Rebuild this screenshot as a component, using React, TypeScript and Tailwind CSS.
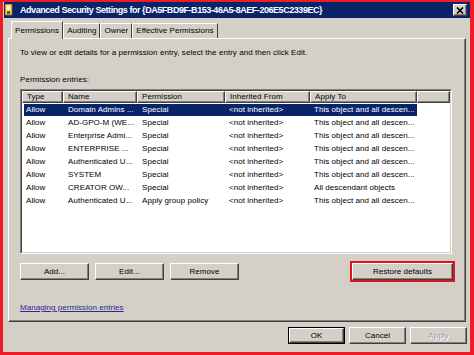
import React from "react";

const rows = [
  ["Allow", "Domain Admins ...", "Special", "<not inherited>", "This object and all descen..."],
  ["Allow", "AD-GPO-M (WE...", "Special", "<not inherited>", "This object and all descen..."],
  ["Allow", "Enterprise Admi...", "Special", "<not inherited>", "This object and all descen..."],
  ["Allow", "ENTERPRISE ...", "Special", "<not inherited>", "This object and all descen..."],
  ["Allow", "Authenticated U...", "Special", "<not inherited>", "This object and all descen..."],
  ["Allow", "SYSTEM", "Special", "<not inherited>", "This object and all descen..."],
  ["Allow", "CREATOR OW...", "Special", "<not inherited>", "All descendant objects"],
  ["Allow", "Authenticated U...", "Apply group policy", "<not inherited>", "This object and all descen..."],
];

const cols = [
  { label: "Type", w: "w-[41px]" },
  { label: "Name", w: "w-[74px]" },
  { label: "Permission", w: "w-[88px]" },
  { label: "Inherited From", w: "w-[85px]" },
  { label: "Apply To", w: "w-[107px]" },
];

const raised =
  "border border-t-white border-l-white border-r-[#404040] border-b-[#404040] shadow-[inset_-1px_-1px_0_#808080] bg-[#d4d0c8]";

function Button({ label, w, disabled, def }: { label: string; w: string; disabled?: boolean; def?: boolean }) {
  const inner = (
    <div className={`${raised} ${def ? "h-[15px]" : "h-[17px]"} flex items-center justify-center`}>
      <span className={disabled ? "text-[#a0a0a0] [text-shadow:1px_1px_0_#fff]" : ""}>{label}</span>
    </div>
  );
  if (def) return <div className={`${w} border border-black`}>{inner}</div>;
  return <div className={w}>{inner}</div>;
}

export default function App() {
  return (
    <div
      className="w-[474px] h-[355px] overflow-hidden border-solid border-[#ee1c24] border-l-[3px] border-t-[2px] border-r-[4px] border-b-[3px] bg-[#d4d0c8] text-black text-[8px] tracking-[0.05px] leading-[10px]"
      style={{ fontFamily: '"Liberation Sans", Arial, sans-serif' }}
    >
      {/* Title bar */}
      <div className="ml-[1px] h-[16px] bg-[#0a246a] flex items-center">
        <svg width="8" height="12" viewBox="0 0 8 12" className="ml-[1px]">
          <rect x="0" y="0" width="7" height="11" fill="#f2c94c" stroke="#8a6d1a" strokeWidth="0.8" />
          <rect x="1.5" y="1.5" width="4" height="5" fill="#fff3b0" />
          <rect x="2" y="7" width="3" height="3" fill="#6b5a2a" />
        </svg>
        <span className="ml-[7px] text-white font-bold text-[9px] tracking-[-0.45px]">
          Advanced Security Settings for {"{"}DA5FBD9F-B153-46A5-8AEF-206E5C2339EC{"}"}
        </span>
        <div className={`ml-auto mr-[3px] w-[14px] h-[12px] ${raised} flex items-center justify-center`}>
          <svg width="8" height="7" viewBox="0 0 8 7">
            <path d="M1 0.5 L7 6.5 M7 0.5 L1 6.5" stroke="#000" strokeWidth="1.6" />
          </svg>
        </div>
      </div>

      {/* Tabs */}
      <div className="mt-[2px] pl-[8px] flex items-end h-[18px]">
        <div className="h-[18px] px-[3px] border border-b-0 border-t-white border-l-white border-r-[#404040] bg-[#d4d0c8] flex items-center relative z-10 -mb-[1px]">
          Permissions
        </div>
        {["Auditing", "Owner", "Effective Permissions"].map((t) => (
          <div
            key={t}
            className="h-[15px] px-[3px] border border-b-0 border-t-white border-l-white border-r-[#404040] flex items-center"
          >
            {t}
          </div>
        ))}
      </div>

      {/* Tab panel */}
      <div className="ml-[5px] w-[458px] h-[284px] border border-t-white border-l-white border-r-[#404040] border-b-[#404040] shadow-[inset_-1px_-1px_0_#808080] px-[11px] flex flex-col">
        <div className="mt-[9px]">To view or edit details for a permission entry, select the entry and then click Edit.</div>
        <div className="mt-[17px]">Permission entries:</div>

        {/* List */}
        <div className="mt-[4px] w-[432px] h-[165px] border border-t-[#808080] border-l-[#808080] border-r-white border-b-white">
          <div className="w-full h-full border border-t-[#404040] border-l-[#404040] border-r-[#d4d0c8] border-b-[#d4d0c8] bg-white flex flex-col">
            <div className="flex h-[12px] bg-[#d4d0c8]">
              {cols.map((c) => (
                <div key={c.label} className={`${c.w} ${raised} pl-[4px] flex items-center`}>
                  {c.label}
                </div>
              ))}
              <div className={`flex-1 ${raised}`} />
            </div>
            {rows.map((r, i) => (
              <div key={i} className="flex h-[13px] items-center">
                <div className={`flex ml-[2px] w-[393px] h-[12px] items-center whitespace-nowrap ${i === 0 ? "bg-[#0a246a] text-white" : ""}`}>
                  <div className="w-[39px] pl-[2px]">{r[0]}</div>
                  <div className="w-[74px] pl-[5px]">{r[1]}</div>
                  <div className="w-[88px] pl-[5px]">{r[2]}</div>
                  <div className="w-[85px] pl-[4px]">{r[3]}</div>
                  <div className="w-[107px] pl-[4px]">{r[4]}</div>
                </div>
              </div>
            ))}
          </div>
        </div>

        {/* Action buttons */}
        <div className="mt-[7px] flex items-center w-[433px]">
          <Button label="Add..." w="w-[69px]" />
          <div className="ml-[6px]">
            <Button label="Edit..." w="w-[69px]" />
          </div>
          <div className="ml-[6px]">
            <Button label="Remove" w="w-[69px]" />
          </div>
          <div className="ml-auto -mr-[2px] border-2 border-[#e2141b] p-0">
            <Button label="Restore defaults" w="w-[101px]" />
          </div>
        </div>

        <div className="mt-[21px]">
          <span className="text-[#2a2a8c] underline">Managing permission entries</span>
        </div>
      </div>

      {/* Bottom buttons */}
      <div className="mt-[5px] flex justify-end pr-[3px] gap-[4px]">
        <Button label="OK" w="w-[57px]" def />
        <Button label="Cancel" w="w-[57px]" />
        <Button label="Apply" w="w-[57px]" disabled />
      </div>
    </div>
  );
}
